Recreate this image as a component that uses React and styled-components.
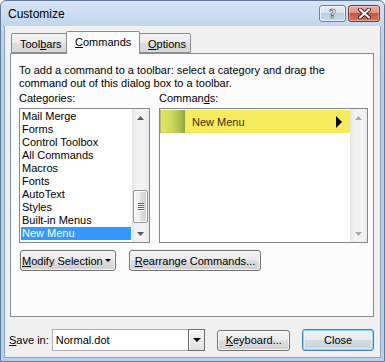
import React from 'react'
import styled, { createGlobalStyle, css } from 'styled-components'

const GlobalStyle = createGlobalStyle`
  html, body { margin: 0; padding: 0; background: #ffffff; }
  body {
    font-family: "Liberation Sans", Arial, sans-serif;
    font-size: 11px;
    color: #000;
  }
`

const categories = [
  'Mail Merge', 'Forms', 'Control Toolbox', 'All Commands', 'Macros',
  'Fonts', 'AutoText', 'Styles', 'Built-in Menus', 'New Menu',
]

function App() {
  return (
    <>
      <GlobalStyle />
      <Window>
        <TitleBar>
          <Title>Customize</Title>
          <CaptionButtons>
            <HelpButton>?</HelpButton>
            <CloseCaption>
              <svg width="13" height="11" viewBox="0 0 13 11">
                <path d="M2 1.5 L11 9.5 M11 1.5 L2 9.5" stroke="#3a1d1a" strokeWidth="4" strokeLinecap="round" />
                <path d="M2 1.5 L11 9.5 M11 1.5 L2 9.5" stroke="#ffffff" strokeWidth="2.2" strokeLinecap="round" />
              </svg>
            </CloseCaption>
          </CaptionButtons>
        </TitleBar>

        <Body>
          <Tabs>
            <Tab>Tool<Key>b</Key>ars</Tab>
            <Tab active><Key>C</Key>ommands</Tab>
            <Tab><Key>O</Key>ptions</Tab>
          </Tabs>

          <Panel>
            <Intro>
              To add a command to a toolbar: select a category and drag the<br />
              command out of this dialog box to a toolbar.
            </Intro>

            <Lists>
              <Column>
                <Label>Categories:</Label>
                <ListBox>
                  <Items>
                    {categories.map((c) => (
                      <CategoryRow key={c} selected={c === 'New Menu'}>{c}</CategoryRow>
                    ))}
                  </Items>
                  <ScrollBar>
                    <ScrollArrow><ArrowGlyph up /></ScrollArrow>
                    <Track />
                    <Thumb>
                      <Grip><i /><i /><i /><i /></Grip>
                    </Thumb>
                    <ScrollArrow><ArrowGlyph /></ScrollArrow>
                  </ScrollBar>
                </ListBox>
              </Column>

              <Column>
                <Label>Comman<Key>d</Key>s:</Label>
                <ListBox>
                  <Items flush>
                    <CommandRow>
                      <MenuSwatch />
                      <CommandText>New Menu</CommandText>
                      <SubArrow />
                    </CommandRow>
                  </Items>
                  <ScrollBar>
                    <ScrollArrow><ArrowGlyph up dim /></ScrollArrow>
                    <Track />
                    <ScrollArrow><ArrowGlyph dim /></ScrollArrow>
                  </ScrollBar>
                </ListBox>
              </Column>
            </Lists>

            <ButtonRow>
              <Button width={96} align="left">
                <Key>M</Key>odify Selection
                <DropCaret />
              </Button>
              <Button width={132}><Key>R</Key>earrange Commands...</Button>
            </ButtonRow>
          </Panel>

          <Footer>
            <Label><Key>S</Key>ave in:</Label>
            <Combo>
              <ComboText>Normal.dot</ComboText>
              <ComboButton><ComboCaret /></ComboButton>
            </Combo>
            <Button width={73}><Key>K</Key>eyboard...</Button>
            <Button width={72} height={22} isDefault>Close</Button>
          </Footer>
        </Body>
      </Window>
    </>
  )
}

function ArrowGlyph({ up, dim }) {
  return (
    <svg width="7" height="4" viewBox="0 0 7 4">
      <polygon
        points={up ? '3.5,0 7,4 0,4' : '0,0 7,0 3.5,4'}
        fill={dim ? '#a9a9a9' : '#5b5b5b'}
      />
    </svg>
  )
}

const Window = styled('div')`
  width: 385px;
  height: 362px;
  box-sizing: border-box;
  display: flex;
  flex-direction: column;
  background: linear-gradient(180deg, #d5e4f4 0px, #c2d7ed 24px, #b9d1ea 60px, #b4d2ec 100%);
  border: 1px solid #62799a;
  border-radius: 6px 6px 0 0;
  overflow: hidden;
`

const TitleBar = styled('div')`
  height: 25px;
  flex: none;
  display: flex;
  align-items: flex-start;
  padding: 0 4px 0 7px;
`

const Title = styled('div')`
  font-size: 12px;
  line-height: 12px;
  margin-top: 7px;
  color: #000;
`

const CaptionButtons = styled('div')`
  margin-left: auto;
  margin-top: 4px;
  display: flex;
  gap: 2px;
`

const captionBase = css`
  height: 17px;
  box-sizing: border-box;
  border-radius: 3px;
  display: flex;
  align-items: center;
  justify-content: center;
`

const HelpButton = styled('div')`
  ${captionBase};
  width: 27px;
  border: 1px solid #6f829b;
  background: linear-gradient(180deg, #e6eff9 0%, #d3e2f2 45%, #b9cee6 50%, #c9dbef 100%);
  box-shadow: inset 0 0 0 1px rgba(255, 255, 255, 0.55);
  color: #fff;
  font-family: "DejaVu Sans", sans-serif;
  font-weight: bold;
  font-size: 12px;
  -webkit-text-stroke: 0.6px #3d4c61;
`

const CloseCaption = styled('div')`
  ${captionBase};
  width: 32px;
  border: 1px solid #7a3a33;
  background: linear-gradient(180deg, #eab2a4 0%, #dc8f7c 45%, #c7543f 50%, #d6785c 100%);
  box-shadow: inset 0 0 0 1px rgba(255, 220, 210, 0.45);
`

const Body = styled('div')`
  flex: 1;
  margin: 0 3px 3px 3px;
  background: #f0f0f0;
  border: 1px solid #8ca1bb;
  border-top: none;
  padding: 5px 6px 0 5px;
  display: flex;
  flex-direction: column;
`

const Tabs = styled('div')`
  height: 22px;
  display: flex;
  align-items: flex-end;
  padding-left: 2px;
  position: relative;
  z-index: 1;
`

const Tab = styled('div')`
  box-sizing: border-box;
  height: ${(p) => (p.active ? '23px' : '20px')};
  margin-bottom: ${(p) => (p.active ? '-1px' : '0')};
  padding: 0 8px;
  display: flex;
  align-items: ${(p) => (p.active ? 'flex-start' : 'center')};
  padding-top: ${(p) => (p.active ? '4px' : '1px')};
  border: 1px solid #898c95;
  border-bottom: ${(p) => (p.active ? 'none' : '1px solid #898c95')};
  margin-left: -1px;
  border-radius: 2px 2px 0 0;
  background: ${(p) =>
    p.active ? '#fcfcfc' : 'linear-gradient(180deg, #f3f3f3 0%, #ebebeb 50%, #dddddd 51%, #d8d8d8 100%)'};
  &:first-child { width: 56px; }
  &:nth-child(2) { width: 74px; }
  &:nth-child(3) { width: 52px; }
`

const Key = styled('span')`
  text-decoration: underline;
`

const Panel = styled('div')`
  height: 264px;
  box-sizing: border-box;
  border: 1px solid #898c95;
  background: #fcfcfc;
  padding: 10px 6px 0 8px;
  display: flex;
  flex-direction: column;
`

const Intro = styled('div')`
  line-height: 13px;
`

const Lists = styled('div')`
  display: grid;
  grid-template-columns: 131px 209px;
  column-gap: 9px;
  margin-top: 2px;
`

const Column = styled('div')`
  display: flex;
  flex-direction: column;
`

const Label = styled('div')`
  line-height: 13px;
  margin-bottom: 3px;
  white-space: nowrap;
`

const ListBox = styled('div')`
  height: 135px;
  box-sizing: border-box;
  border: 1px solid #828790;
  background: #fff;
  display: flex;
`

const Items = styled('div')`
  flex: 1;
  min-width: 0;
  padding: ${(p) => (p.flush ? '1px 0 0 0' : '1px 1px 0 1px')};
  display: flex;
  flex-direction: column;
`

const CategoryRow = styled('div')`
  height: 13px;
  line-height: 13px;
  padding-left: 1px;
  white-space: nowrap;
  background: ${(p) => (p.selected ? '#3399ff' : 'transparent')};
  color: ${(p) => (p.selected ? '#fff' : '#000')};
`

const CommandRow = styled('div')`
  height: 23px;
  display: grid;
  grid-template-columns: 25px 1fr 6px;
  column-gap: 7px;
  align-items: center;
  padding-right: 8px;
  background: #f5eb5c;
`

const MenuSwatch = styled('div')`
  align-self: stretch;
  box-sizing: border-box;
  border-left: 1px solid #b9bd47;
  background: linear-gradient(90deg, #e2e460 0%, #cfd95a 45%, #a9bd4e 80%, #8ea447 100%);
`

const CommandText = styled('div')`
  color: #3b2c0a;
  white-space: nowrap;
`

const SubArrow = styled('div')`
  width: 0;
  height: 0;
  border-top: 6px solid transparent;
  border-bottom: 6px solid transparent;
  border-left: 6px solid #000;
`

const ScrollBar = styled('div')`
  width: 17px;
  flex: none;
  display: flex;
  flex-direction: column;
  background: linear-gradient(90deg, #e6e6e6 0%, #f1f1f1 25%, #f3f3f3 75%, #e8e8e8 100%);
`

const ScrollArrow = styled('div')`
  height: 17px;
  flex: none;
  display: flex;
  align-items: center;
  justify-content: center;
`

const Track = styled('div')`
  flex: 1;
`

const Thumb = styled('div')`
  height: 33px;
  margin: 0 1px 2px 1px;
  box-sizing: border-box;
  border: 1px solid #969696;
  border-radius: 2px;
  background: linear-gradient(90deg, #f5f5f5 0%, #ececec 45%, #dcdcdc 55%, #d4d4d4 100%);
  box-shadow: inset 0 0 0 1px rgba(255, 255, 255, 0.8);
  display: flex;
  align-items: center;
  justify-content: center;
`

const Grip = styled('div')`
  display: flex;
  flex-direction: column;
  gap: 1px;
  i {
    display: block;
    width: 6px;
    height: 1px;
    background: #5f5f5f;
    box-shadow: 0 1px 0 #ffffff;
  }
`

const ButtonRow = styled('div')`
  margin-top: 7px;
  display: flex;
  gap: 13px;
  padding-left: 1px;
`

const Button = styled('div')`
  width: ${(p) => p.width}px;
  height: ${(p) => p.height || 21}px;
  box-sizing: border-box;
  display: flex;
  align-items: center;
  justify-content: ${(p) => (p.align === 'left' ? 'flex-start' : 'center')};
  padding: ${(p) => (p.align === 'left' ? '0 0 0 1px' : '0')};
  border: 1px solid #707070;
  border-radius: 3px;
  background: linear-gradient(180deg, #f2f2f2 0%, #ebebeb 48%, #dddddd 52%, #cfcfcf 100%);
  box-shadow: inset 0 0 0 1px rgba(255, 255, 255, 0.75);
  white-space: nowrap;
  ${(p) =>
    p.isDefault &&
    css`
      border-color: #3c7fb1;
      box-shadow: inset 0 0 0 1px #8fd8f7, inset 0 0 0 2px rgba(255, 255, 255, 0.4);
      background: linear-gradient(180deg, #eef3f7 0%, #e5eaee 48%, #d3dce2 52%, #c9d2d8 100%);
    `}
`

const DropCaret = styled('span')`
  margin-left: auto;
  margin-right: 4px;
  width: 0;
  height: 0;
  border-left: 3px solid transparent;
  border-right: 3px solid transparent;
  border-top: 3px solid #000;
`

const Footer = styled('div')`
  margin-top: 12px;
  margin-left: -1px;
  display: flex;
  align-items: center;
  gap: 12px;
  & > ${Label} { margin: 0 -9px 0 0; }
`

const Combo = styled('div')`
  width: 154px;
  height: 22px;
  box-sizing: border-box;
  border: 1px solid #abadb3;
  background: #fff;
  display: flex;
  align-items: center;
`

const ComboText = styled('div')`
  flex: 1;
  padding-left: 3px;
`

const ComboButton = styled('div')`
  width: 17px;
  align-self: stretch;
  margin: -1px -1px -1px 0;
  box-sizing: border-box;
  border: 1px solid #6d6d6d;
  background: linear-gradient(180deg, #f4f4f4 0%, #e2e2e2 100%);
  box-shadow: inset 1px 1px 0 #ffffff;
  display: flex;
  align-items: center;
  justify-content: center;
`

const ComboCaret = styled('span')`
  width: 0;
  height: 0;
  border-left: 4px solid transparent;
  border-right: 4px solid transparent;
  border-top: 4px solid #000;
`

export default App
